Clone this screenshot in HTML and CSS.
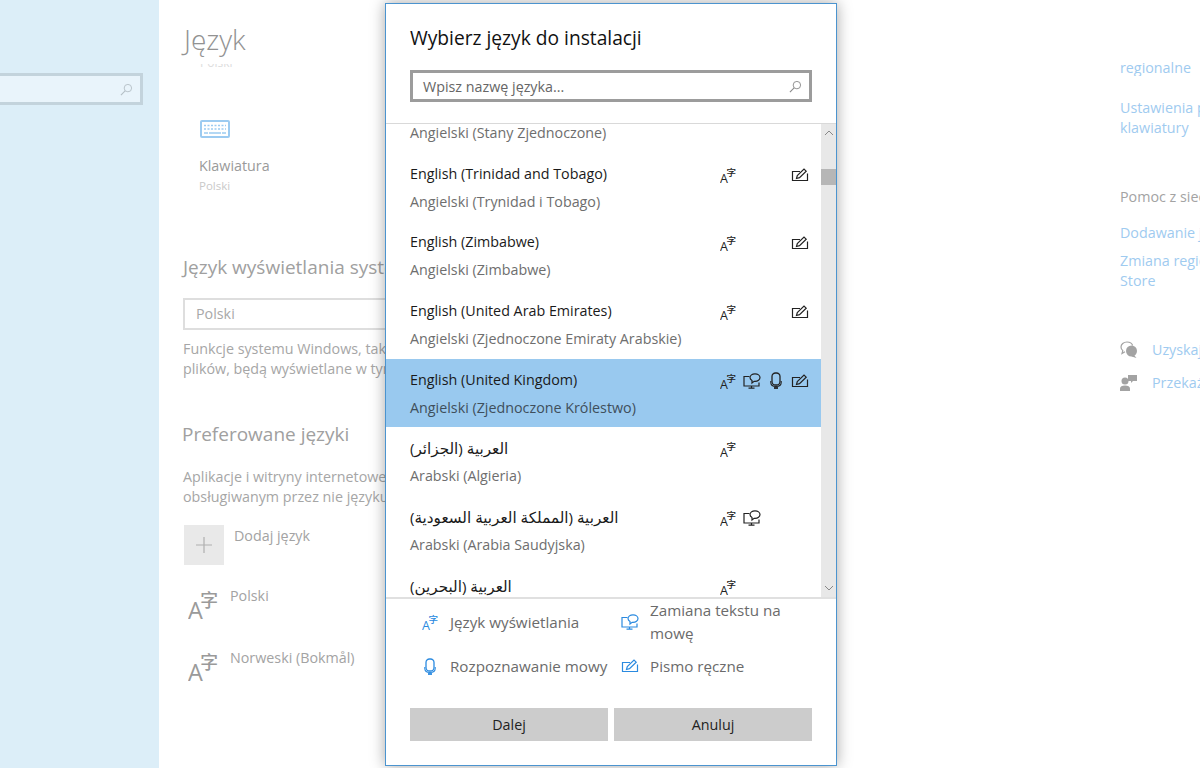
FILE: index.html
```html
<!DOCTYPE html>
<html lang="pl">
<head>
  <meta charset="UTF-8" />
  <title>Język</title>
  <link rel="stylesheet" href="styles.css">
</head>
<body>
  <svg class="sprites" aria-hidden="true">
    <symbol id="i-lang" viewBox="0 0 16 16">
      <text x="0" y="15.500" font-size="12.500" fill="currentColor" font-family="Open Sans, sans-serif">A</text>
      <text x="6.500" y="9.200" font-size="9.500" fill="currentColor" font-family="Noto Sans CJK SC, sans-serif" font-weight="500">字</text>
    </symbol>
    <symbol id="i-tts" viewBox="0 0 18 16">
      <path d="M6.500 3.500H1v9.500h15V9.500M8.500 13v2M5.500 15.200h6" fill="none" stroke="currentColor" stroke-width="1.200"/>
      <path d="M12 .8c2.800 0 5 1.600 5 3.800s-2.200 3.800-5 3.800c-.3 0-.6 0-.9-.1L9 10V7.500C7.800 6.800 7 5.800 7 4.600 7 2.400 9.200.8 12 .8z" fill="none" stroke="currentColor" stroke-width="1.200"/>
    </symbol>
    <symbol id="i-mic" viewBox="0 0 12 17">
      <rect x="2" y="1" width="8" height="12" rx="3.500" fill="none" stroke="currentColor" stroke-width="1.300"/>
      <path d="M.8 9v1.500C.8 13 3 14.500 6 14.500s5.200-1.500 5.200-4V9" fill="none" stroke="currentColor" stroke-width="1.100"/>
      <path d="M4 16h4" stroke="currentColor" stroke-width="1.800"/>
    </symbol>
    <symbol id="i-pen" viewBox="0 0 18 14">
      <path d="M9 3.500H1.500v9h15V5.500" fill="none" stroke="currentColor" stroke-width="1.200"/>
      <path d="M5.500 10.500l.8-3L13 1l2.200 2.200-6.700 6.500z" fill="none" stroke="currentColor" stroke-width="1.200"/>
    </symbol>
    <symbol id="i-search" viewBox="0 0 14 14">
      <circle cx="8.500" cy="5.500" r="4" fill="none" stroke="currentColor"/>
      <path d="M5.500 8.500L1 13" stroke="currentColor" stroke-width="1.200"/>
    </symbol>
  </svg>

  <div class="page">
    <aside class="sidebar">
      <div class="side-search">
        <svg class="side-search-icon"><use href="#i-search"/></svg>
      </div>
    </aside>

    <main class="content">
      <h1 class="page-title">Język</h1>
      <div class="sliver"><span>Polski</span></div>

      <div class="feature">
        <svg class="kbd-icon" viewBox="0 0 30 18">
          <rect x="1" y="1" width="28" height="16" rx="1" fill="none" stroke="currentColor" stroke-width="2"/>
          <path d="M4 5.500h22M4 9h22" stroke="currentColor" stroke-width="1.500" stroke-dasharray="2 1.500"/>
          <path d="M4 13h4M9 13h12M22 13h4" stroke="currentColor" stroke-width="1.500"/>
        </svg>
        <div class="feature-name">Klawiatura</div>
        <div class="feature-sub">Polski</div>
      </div>

      <h2 class="section-title display-title">Język wyświetlania systemu Windows</h2>
      <div class="fake-select">Polski</div>
      <p class="note">Funkcje systemu Windows, takie jak Ustawienia i Eksplorator<br>plików, będą wyświetlane w tym języku.</p>

      <h2 class="section-title pref-title">Preferowane języki</h2>
      <p class="note note-pref">Aplikacje i witryny internetowe będą wyświetlane<br>obsługiwanym przez nie języku z listy.</p>

      <div class="pref-list">
        <div class="pref-row">
          <span class="add-box">
            <svg viewBox="0 0 18 18"><path d="M9 1v16M1 9h16" stroke="currentColor" stroke-width="1.200"/></svg>
          </span>
          <span class="pref-add-label">Dodaj język</span>
        </div>
        <div class="pref-row pref-lang">
          <svg class="pref-icon"><use href="#i-lang"/></svg>
          <span>Polski</span>
        </div>
        <div class="pref-row pref-lang">
          <svg class="pref-icon"><use href="#i-lang"/></svg>
          <span>Norweski (Bokmål)</span>
        </div>
      </div>
    </main>

    <aside class="related">
      <div class="related-clip"><a>regionalne</a></div>
      <a class="related-link">Ustawienia pisania i<br>klawiatury</a>
      <div class="related-head">Pomoc z sieci Web</div>
      <a class="related-link help-first">Dodawanie języka</a>
      <a class="related-link help-second">Zmiana regionu w sklepie<br>Store</a>
      <div class="related-action action-first">
        <svg viewBox="0 0 18 18"><path d="M7 1C3.500 1 1 3.200 1 6c0 1.500.7 2.700 1.800 3.600L2 12.500l3-1.700" fill="none" stroke="currentColor" stroke-width="1.200"/><path d="M7 1c2.800 0 5 1.400 5.700 3.500" fill="none" stroke="currentColor" stroke-width="1.200"/><circle cx="11.500" cy="10" r="5.500" fill="currentColor"/><path d="M14 14l2.500 3-5-1.500z" fill="currentColor"/></svg>
        <a>Uzyskaj pomoc</a>
      </div>
      <div class="related-action">
        <svg viewBox="0 0 18 18"><circle cx="5" cy="7" r="3.500" fill="currentColor"/><path d="M0 17v-2.500C0 12.500 2 11.500 5 11.500s5 1 5 3V17z" fill="currentColor"/><path d="M8 1h9v6h-4l-2 2V7H8z" fill="currentColor"/></svg>
        <a>Przekaż opinię</a>
      </div>
    </aside>
  </div>

  <section class="dialog">
    <h2 class="dialog-title">Wybierz język do instalacji</h2>
    <div class="dialog-search">
      <span>Wpisz nazwę języka...</span>
      <svg><use href="#i-search"/></svg>
    </div>

    <div class="list-wrap">
      <div class="list">
        <div class="list-inner">
          <div class="row">
            <div class="row-text"><div class="row-name">English (United States)</div><div class="row-sub">Angielski (Stany Zjednoczone)</div></div>
          </div>
          <div class="row">
            <div class="row-text"><div class="row-name">English (Trinidad and Tobago)</div><div class="row-sub">Angielski (Trynidad i Tobago)</div></div>
            <div class="row-icons">
              <svg class="ic ic-lang"><use href="#i-lang"/></svg><i></i><i></i>
              <svg class="ic ic-pen"><use href="#i-pen"/></svg>
            </div>
          </div>
          <div class="row">
            <div class="row-text"><div class="row-name">English (Zimbabwe)</div><div class="row-sub">Angielski (Zimbabwe)</div></div>
            <div class="row-icons">
              <svg class="ic ic-lang"><use href="#i-lang"/></svg><i></i><i></i>
              <svg class="ic ic-pen"><use href="#i-pen"/></svg>
            </div>
          </div>
          <div class="row">
            <div class="row-text"><div class="row-name">English (United Arab Emirates)</div><div class="row-sub">Angielski (Zjednoczone Emiraty Arabskie)</div></div>
            <div class="row-icons">
              <svg class="ic ic-lang"><use href="#i-lang"/></svg><i></i><i></i>
              <svg class="ic ic-pen"><use href="#i-pen"/></svg>
            </div>
          </div>
          <div class="row selected">
            <div class="row-text"><div class="row-name">English (United Kingdom)</div><div class="row-sub">Angielski (Zjednoczone Królestwo)</div></div>
            <div class="row-icons">
              <svg class="ic ic-lang"><use href="#i-lang"/></svg>
              <svg class="ic ic-tts"><use href="#i-tts"/></svg>
              <svg class="ic ic-mic"><use href="#i-mic"/></svg>
              <svg class="ic ic-pen"><use href="#i-pen"/></svg>
            </div>
          </div>
          <div class="row">
            <div class="row-text"><div class="row-name"><bdi dir="rtl">العربية (الجزائر)</bdi></div><div class="row-sub">Arabski (Algieria)</div></div>
            <div class="row-icons">
              <svg class="ic ic-lang"><use href="#i-lang"/></svg>
            </div>
          </div>
          <div class="row">
            <div class="row-text"><div class="row-name"><bdi dir="rtl">العربية (المملكة العربية السعودية)</bdi></div><div class="row-sub">Arabski (Arabia Saudyjska)</div></div>
            <div class="row-icons">
              <svg class="ic ic-lang"><use href="#i-lang"/></svg>
              <svg class="ic ic-tts"><use href="#i-tts"/></svg>
            </div>
          </div>
          <div class="row">
            <div class="row-text"><div class="row-name"><bdi dir="rtl">العربية (البحرين)</bdi></div><div class="row-sub">Arabski (Bahrajn)</div></div>
            <div class="row-icons">
              <svg class="ic ic-lang"><use href="#i-lang"/></svg>
            </div>
          </div>
        </div>
      </div>
      <div class="scrollbar">
        <svg class="arrow" viewBox="0 0 10 6"><path d="M1 5l4-4 4 4" fill="none" stroke="currentColor"/></svg>
        <div class="track"><div class="thumb"></div></div>
        <svg class="arrow" viewBox="0 0 10 6"><path d="M1 1l4 4 4-4" fill="none" stroke="currentColor"/></svg>
      </div>
    </div>

    <div class="legend">
      <div class="legend-item">
        <svg class="ic ic-lang"><use href="#i-lang"/></svg>
        <span>Język wyświetlania</span>
      </div>
      <div class="legend-item">
        <svg class="ic ic-tts"><use href="#i-tts"/></svg>
        <span>Zamiana tekstu na<br>mowę</span>
      </div>
      <div class="legend-item">
        <svg class="ic ic-mic"><use href="#i-mic"/></svg>
        <span>Rozpoznawanie mowy</span>
      </div>
      <div class="legend-item">
        <svg class="ic ic-pen"><use href="#i-pen"/></svg>
        <span>Pismo ręczne</span>
      </div>
    </div>

    <div class="dialog-buttons">
      <button class="btn">Dalej</button>
      <button class="btn">Anuluj</button>
    </div>
  </section>
</body>
</html>
```

FILE: styles.css
```css
* {
  box-sizing: border-box;
}

html, body {
  height: 100%;
}

body {
  margin: 0;
  font-family: "Open Sans", "DejaVu Sans", sans-serif;
  font-size: 14.300px;
  background: #fff;
  overflow: hidden;
  position: relative;
}

.sprites {
  display: none;
}

.page {
  display: flex;
  height: 768px;
}

/* left column */
.sidebar {
  width: 159px;
  flex: none;
  background: #dceef8;
  padding-top: 73px;
}

.side-search {
  width: 143px;
  height: 32px;
  background: #e9f4fb;
  border: 3px solid #c3d3dc;
  border-left: none;
  display: flex;
  align-items: center;
  justify-content: flex-end;
  padding-right: 7px;
}

.side-search-icon {
  width: 13px;
  height: 13px;
  color: #b4bfc6;
}

/* settings page behind the dialog */
.content {
  width: 961px;
  flex: none;
  padding: 0 0 0 24px;
  color: #a3a3a3;
  white-space: nowrap;
}

.page-title {
  margin: 20px 0 0 1px;
  font-size: 28px;
  line-height: 38px;
  font-weight: 300;
  color: #929292;
}

.sliver {
  height: 3px;
  margin: 6px 0 0 17px;
  overflow: hidden;
  display: flex;
  align-items: flex-end;
  font-size: 12px;
  line-height: 8px;
  color: #ddd;
}

.feature {
  margin: 53px 0 0 16px;
}

.kbd-icon {
  display: block;
  width: 30px;
  height: 18px;
  margin-left: 1px;
  color: #9ccbf1;
}

.feature-name {
  margin-top: 18px;
  line-height: 20px;
  color: #9a9a9a;
}

.feature-sub {
  margin-top: 1px;
  font-size: 11.500px;
  line-height: 18px;
  color: #c9c9c9;
}

.section-title {
  margin: 0;
  font-size: 19px;
  line-height: 26px;
  font-weight: 400;
  color: #a0a0a0;
}

.display-title {
  margin-top: 59px;
}

.fake-select {
  width: 300px;
  height: 32px;
  margin: 18px 0 0;
  padding: 0 11px;
  border: 2px solid #dedede;
  line-height: 28px;
  color: #a8a8a8;
}

.note {
  margin: 8.500px 0 0;
  line-height: 20.500px;
  color: #a6a6a6;
}

.pref-title {
  margin: 41px 0 0 -1px;
}

.note-pref {
  margin-top: 20px;
}

.pref-list {
  margin-top: 17px;
}

.pref-row {
  display: flex;
  align-items: flex-start;
}

.add-box {
  width: 40px;
  height: 40px;
  margin-left: 1px;
  background: #e9e9e9;
  color: #b0b0b0;
  display: flex;
  align-items: center;
  justify-content: center;
}

.add-box svg {
  width: 18px;
  height: 18px;
}

.pref-add-label {
  margin-left: 10px;
  line-height: 22px;
}

.pref-lang {
  margin-top: 20px;
  height: 40px;
}

.pref-lang + .pref-lang {
  margin-top: 22px;
}

.pref-icon {
  width: 30px;
  height: 30px;
  margin: 5px 12px 0 5px;
  color: #9a9a9a;
}

.pref-lang span {
  line-height: 22px;
}

/* right column */
.related {
  flex: none;
  width: 80px;
  overflow: hidden;
  white-space: nowrap;
  color: #9fcbf0;
  line-height: 20px;
}

.related-clip {
  height: 14px;
  margin-top: 62px;
  overflow: hidden;
  display: flex;
  align-items: flex-end;
  line-height: 16px;
}

.related-link {
  display: block;
  margin-top: 22px;
}

.related-head {
  margin-top: 49px;
  color: #a3a3a3;
}

.help-first {
  margin-top: 16px;
}

.help-second {
  margin-top: 8px;
}

.related-action {
  display: flex;
  align-items: center;
  gap: 14px;
}

.related-action svg {
  width: 18px;
  height: 18px;
  flex: none;
  color: #a3a3a3;
}

.action-first {
  margin-top: 49px;
  margin-bottom: 13px;
}

/* dialog */
.dialog {
  position: absolute;
  left: 385px;
  top: 3px;
  width: 452px;
  height: 763px;
  background: #fff;
  border: 1px solid #4b94cf;
  box-shadow: 0 0 14px rgba(0, 0, 0, 0.35);
  display: flex;
  flex-direction: column;
  color: #1f1f1f;
}

.dialog-title {
  margin: 20px 0 0 24px;
  font-size: 19.200px;
  line-height: 28px;
  font-weight: 400;
  color: #111;
}

.dialog-search {
  width: 402px;
  height: 32px;
  margin: 18px 0 0 24px;
  padding: 0 7px 0 10px;
  border: 3px solid #9c9c9c;
  display: flex;
  align-items: center;
  justify-content: space-between;
  color: #666;
}

.dialog-search svg {
  width: 13px;
  height: 13px;
  color: #8a8a8a;
}

.list-wrap {
  margin-top: 21px;
  height: 476px;
  border-top: 1px solid #d9d9d9;
  border-bottom: 2px solid #e0e0e0;
  display: flex;
}

.list {
  flex: 1;
  overflow: hidden;
}

.list-inner {
  margin-top: -40px;
}

.row {
  height: 68.670px;
  display: flex;
  padding: 0 9px 0 24px;
}

.row.selected {
  background: #99c9ef;
}

.row-text {
  flex: 1;
  white-space: nowrap;
}

.row-name {
  margin-top: 11px;
  height: 20px;
  line-height: 20px;
  color: #1a1a1a;
}

.row-name bdi {
  font-size: 15.200px;
}

.row-sub {
  margin-top: 8px;
  line-height: 20px;
  color: #6e6e6e;
}

.row.selected .row-sub {
  color: #3f4f5c;
}

.row-icons {
  display: grid;
  grid-template-columns: repeat(4, 24px);
  grid-auto-rows: 18px;
  justify-items: center;
  align-items: center;
  margin-top: 13px;
  color: #222;
  align-self: flex-start;
}

.ic {
  display: block;
}

.ic-lang {
  width: 16px;
  height: 16px;
}

.ic-tts {
  width: 18px;
  height: 16px;
}

.ic-mic {
  width: 12px;
  height: 17px;
}

.ic-pen {
  width: 18px;
  height: 14px;
}

.scrollbar {
  width: 15px;
  flex: none;
  background: #e8e8e8;
  display: flex;
  flex-direction: column;
  align-items: center;
  color: #888;
}

.arrow {
  flex: none;
  width: 10px;
  height: 6px;
  margin: 6px 0;
}

.track {
  flex: 1;
  width: 100%;
}

.thumb {
  height: 16px;
  margin-top: 27px;
  background: #b6b6b6;
}

.legend {
  display: grid;
  grid-template-columns: 200px 1fr;
  grid-template-rows: 46px 42px;
  margin: 0 0 0 35px;
  font-size: 15.200px;
  color: #6b6b6b;
  line-height: 23px;
  white-space: nowrap;
}

.legend-item {
  display: grid;
  grid-template-columns: 18px 1fr;
  column-gap: 11px;
  align-items: center;
  justify-items: center;
}

.legend-item span {
  justify-self: start;
}

.legend-item .ic {
  color: #2a8ae0;
}

.dialog-buttons {
  display: grid;
  grid-template-columns: 198px 198px;
  gap: 6px;
  margin: 21px 0 0 24px;
}

.btn {
  height: 33px;
  border: none;
  background: #ccc;
  color: #222;
  font-family: inherit;
  font-size: 14.300px;
}
```
